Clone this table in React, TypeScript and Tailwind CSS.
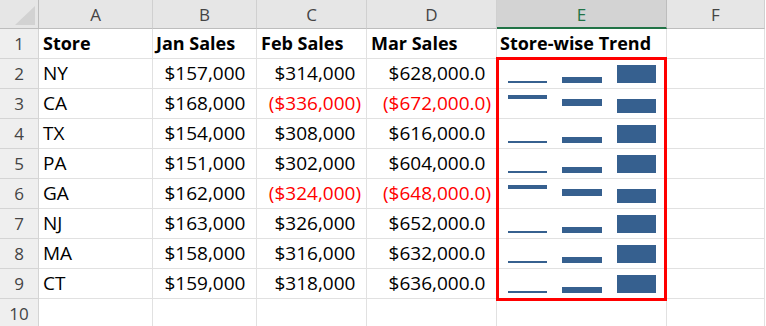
import React from 'react';

type Row = {
  store: string;
  jan: string;
  feb: string;
  mar: string;
  neg: boolean;
};

const rows: Row[] = [
  { store: 'NY', jan: '$157,000', feb: '$314,000', mar: '$628,000.0', neg: false },
  { store: 'CA', jan: '$168,000', feb: '($336,000)', mar: '($672,000.0)', neg: true },
  { store: 'TX', jan: '$154,000', feb: '$308,000', mar: '$616,000.0', neg: false },
  { store: 'PA', jan: '$151,000', feb: '$302,000', mar: '$604,000.0', neg: false },
  { store: 'GA', jan: '$162,000', feb: '($324,000)', mar: '($648,000.0)', neg: true },
  { store: 'NJ', jan: '$163,000', feb: '$326,000', mar: '$652,000.0', neg: false },
  { store: 'MA', jan: '$158,000', feb: '$316,000', mar: '$632,000.0', neg: false },
  { store: 'CT', jan: '$159,000', feb: '$318,000', mar: '$636,000.0', neg: false },
];

const cols = ['A', 'B', 'C', 'D', 'E', 'F'];

const cell = 'h-[30px] border-r border-b border-[#e1e1e1] flex items-center';
const rowHead =
  'h-[30px] border-r border-b border-[#d4d4d4] bg-[#efefef] flex items-center justify-center text-[#444] text-[17px]';
const title = `${cell} font-bold text-[18px]`;

const Money = ({ value }: { value: string }) => {
  const negative = value.startsWith('(');
  return (
    <div className={`${cell} justify-end pr-[5px] ${negative ? 'text-[#ff0000]' : 'text-black'}`}>
      <span>{value}</span>
      {!negative && <span className="invisible">)</span>}
    </div>
  );
};

const Spark = ({ neg }: { neg: boolean }) => (
  <svg width="170" height="29" className="block">
    {neg ? (
      <g fill="#36608f">
        <rect x="11" y="6" width="39" height="4" />
        <rect x="65" y="10" width="40" height="7" />
        <rect x="120" y="10" width="39" height="14" />
      </g>
    ) : (
      <g fill="#36608f">
        <rect x="11" y="22" width="39" height="2" />
        <rect x="65" y="18" width="40" height="6" />
        <rect x="120" y="6" width="39" height="18" />
      </g>
    )}
  </svg>
);

export default function App() {
  return (
    <div className="relative w-[766px] h-[326px] overflow-hidden bg-white font-['Open_Sans',sans-serif] text-[19px] text-black">
      <div className="grid grid-cols-[39px_114px_104px_110px_130px_170px_98px]">
        {/* column headers */}
        <div className="h-[29px] border-r border-b border-[#bdbdbd] bg-[#e6e6e6] relative">
          <svg width="38" height="28" className="absolute left-0 top-0">
            <polygon points="15,25 35,25 35,6" fill="#d2d2d2" />
          </svg>
        </div>
        {cols.map((c) =>
          c === 'E' ? (
            <div
              key={c}
              className="h-[29px] border-r border-[#bdbdbd] border-b-2 border-b-[#217346] bg-[#d3d3d3] flex items-center justify-center pt-[2px] text-[#217346] text-[17px]"
            >
              {c}
            </div>
          ) : (
            <div
              key={c}
              className="h-[29px] border-r border-b border-r-[#d0d0d0] border-b-[#bdbdbd] bg-[#e6e6e6] flex items-center justify-center pt-[2px] text-[#444] text-[17px]"
            >
              {c}
            </div>
          )
        )}

        {/* row 1 */}
        <div className={rowHead}>1</div>
        <div className={`${title} pl-[4px]`}>Store</div>
        <div className={`${title} pl-[3px]`}>Jan Sales</div>
        <div className={`${title} pl-[4px]`}>Feb Sales</div>
        <div className={`${title} pl-[4px]`}>Mar Sales</div>
        <div className={`${title} pl-[3px]`}>Store-wise Trend</div>
        <div className={cell} />

        {rows.map((r, i) => (
          <React.Fragment key={r.store}>
            <div className={rowHead}>{i + 2}</div>
            <div className={`${cell} pl-[4px]`}>{r.store}</div>
            <Money value={r.jan} />
            <Money value={r.feb} />
            <Money value={r.mar} />
            <div className={`${cell} items-start`}>
              <Spark neg={r.neg} />
            </div>
            <div className={cell} />
          </React.Fragment>
        ))}

        {/* row 10 */}
        <div className={rowHead}>10</div>
        <div className={cell} />
        <div className={cell} />
        <div className={cell} />
        <div className={cell} />
        <div className={cell} />
        <div className={cell} />
      </div>

      {/* selection outline */}
      <div className="absolute left-[496px] top-[57px] w-[171px] h-[244px] border-[3px] border-[#ff0000] pointer-events-none" />
    </div>
  );
}
